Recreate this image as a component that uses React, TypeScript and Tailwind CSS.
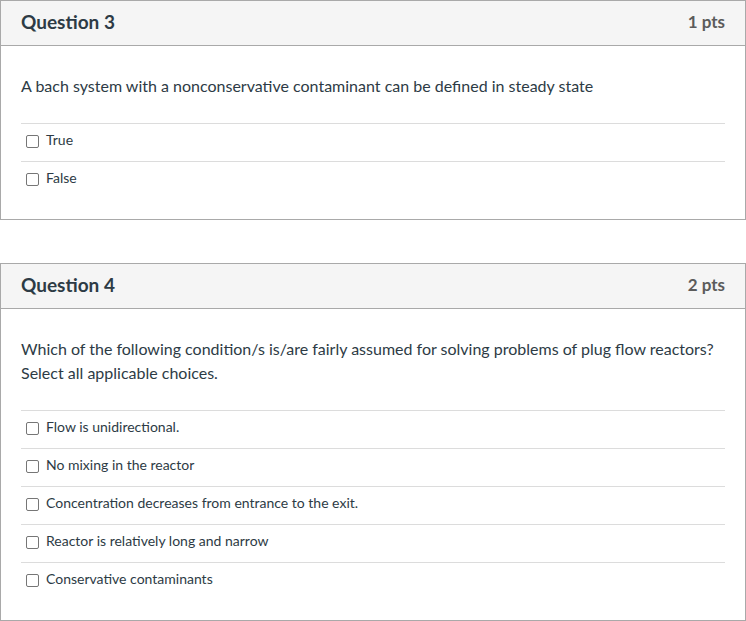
const QUESTIONS = [
  {
    id: "q3",
    title: "Question 3",
    points: "1 pts",
    text: ["A bach system with a nonconservative contaminant can be defined in steady state"],
    options: ["True", "False"],
  },
  {
    id: "q4",
    title: "Question 4",
    points: "2 pts",
    text: [
      "Which of the following condition/s is/are fairly assumed for solving problems of plug flow reactors?",
      "Select all applicable choices.",
    ],
    options: [
      "Flow is unidirectional.",
      "No mixing in the reactor",
      "Concentration decreases from entrance to the exit.",
      "Reactor is relatively long and narrow",
      "Conservative contaminants",
    ],
  },
];

function QuestionCard({ q }: { q: (typeof QUESTIONS)[number] }) {
  return (
    <div className="w-[746px] border border-[#a9a9a9] bg-white">
      <div className="flex h-[45px] items-center justify-between border-b border-[#a9a9a9] bg-[#f5f5f5] px-5 pb-[2px]">
        <h2 className="text-[19px] font-bold text-[#2d3b45]">{q.title}</h2>
        <span className="text-[17px] font-bold text-[#5b5b5b]">{q.points}</span>
      </div>
      <div className="px-5 pt-[28px] pb-5">
        <div className="text-[16px] leading-6 text-[#2d3b45]">
          {q.text.map((line) => (
            <p key={line}>{line}</p>
          ))}
        </div>
        <div className="mt-[25px]">
          {q.options.map((opt) => (
            <label
              key={opt}
              className="flex h-[38px] items-start gap-[7px] border-t border-[#dcdcdc] pt-[6px] pl-[5px] text-[14px] leading-[20px] text-[#2d3b45]"
            >
              <span className="mt-[5px] h-[13px] w-[13px] rounded-[2px] border border-[#767676] bg-white" />
              <span>{opt}</span>
            </label>
          ))}
        </div>
      </div>
    </div>
  );
}

export default function App() {
  return (
    <div
      className="flex w-[746px] flex-col gap-[43px] bg-white"
      style={{ fontFamily: "Lato, 'Liberation Sans', sans-serif" }}
    >
      {QUESTIONS.map((q) => (
        <QuestionCard key={q.id} q={q} />
      ))}
    </div>
  );
}
